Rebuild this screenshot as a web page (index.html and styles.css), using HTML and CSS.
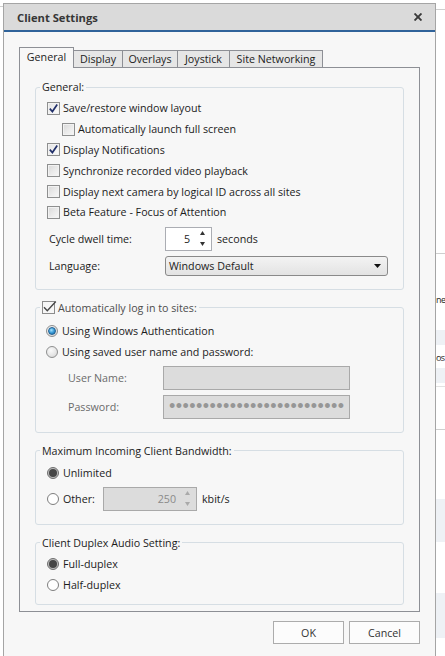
FILE: index.html
```html
<!DOCTYPE html>
<html>
<head>
<meta charset="utf-8">
<title>Client Settings</title>
<link rel="stylesheet" href="styles.css">
</head>
<body>
<div class="screen">
  <div class="bg-left"><div class="gap g6"></div><div class="hline"></div></div>

  <div class="dialog">
    <div class="titlebar">
      <span class="title">Client Settings</span>
      <svg class="close" width="8" height="8" viewBox="0 0 8 8"><path d="M0.5 0.5 L7.5 7.5 M7.5 0.5 L0.5 7.5" stroke="#3a3a3a" stroke-width="1.9" fill="none"/></svg>
    </div>

    <div class="dlg-body">
      <div class="tabs">
        <div class="tab active w-general">General</div>
        <div class="tab w-display">Display</div>
        <div class="tab w-overlays">Overlays</div>
        <div class="tab w-joystick">Joystick</div>
        <div class="tab w-site">Site Networking</div>
      </div>

      <div class="panel">
        <fieldset class="group">
          <legend>General:</legend>
          <div class="gbody g1">
            <div class="row"><span class="cb checked"><svg width="11" height="11" viewBox="0 0 11 11"><path d="M1.8 5.6 L4.4 8.6 L9.2 1.6" stroke="#22306a" stroke-width="1.7" fill="none"/></svg></span><span>Save/restore window layout</span></div>
            <div class="row indent"><span class="cb"></span><span>Automatically launch full screen</span></div>
            <div class="row"><span class="cb checked"><svg width="11" height="11" viewBox="0 0 11 11"><path d="M1.8 5.6 L4.4 8.6 L9.2 1.6" stroke="#22306a" stroke-width="1.7" fill="none"/></svg></span><span>Display Notifications</span></div>
            <div class="row"><span class="cb"></span><span>Synchronize recorded video playback</span></div>
            <div class="row"><span class="cb"></span><span>Display next camera by logical ID across all sites</span></div>
            <div class="row"><span class="cb"></span><span>Beta Feature - Focus of Attention</span></div>

            <div class="frow spin-row">
              <span class="flabel">Cycle dwell time:</span>
              <div class="spin">
                <span class="val">5</span>
                <span class="arrows">
                  <svg width="5" height="4" viewBox="0 0 5 4"><path d="M2.5 0 L5 4 L0 4 Z" fill="#333"/></svg>
                  <svg width="5" height="4" viewBox="0 0 5 4"><path d="M0 0 L5 0 L2.5 4 Z" fill="#333"/></svg>
                </span>
              </div>
              <span class="unit">seconds</span>
            </div>
            <div class="frow lang-row">
              <span class="flabel">Language:</span>
              <div class="combo">
                <span>Windows Default</span>
                <svg width="7" height="4" viewBox="0 0 7 4"><path d="M0 0 L7 0 L3.5 4 Z" fill="#111"/></svg>
              </div>
            </div>
          </div>
        </fieldset>

        <fieldset class="group">
          <legend class="cb-legend"><span class="cbflat"><svg width="15" height="12" viewBox="0 0 15 12"><path d="M2 6.3 L5.3 9.8 L13.8 0.6" stroke="#474747" stroke-width="1.4" fill="none"/></svg></span><span class="muted">Automatically log in to sites:</span></legend>
          <div class="gbody g2">
            <div class="row"><span class="rd aero on"></span><span>Using Windows Authentication</span></div>
            <div class="row"><span class="rd aero"></span><span>Using saved user name and password:</span></div>
            <div class="frow cred first">
              <span class="clabel">User Name:</span>
              <div class="dis-input"></div>
            </div>
            <div class="frow cred">
              <span class="clabel">Password:</span>
              <div class="dis-input"><span class="dots">••••••••••••••••••••••••••</span></div>
            </div>
          </div>
        </fieldset>

        <fieldset class="group">
          <legend>Maximum Incoming Client Bandwidth:</legend>
          <div class="gbody g3">
            <div class="row"><span class="rd flat on"></span><span>Unlimited</span></div>
            <div class="frow other-row">
              <span class="rd flat"></span>
              <span class="olabel">Other:</span>
              <div class="dis-spin">
                <span class="val">250</span>
                <span class="arrows">
                  <svg width="5" height="4" viewBox="0 0 5 4"><path d="M2.5 0 L5 4 L0 4 Z" fill="#a9a9a9"/></svg>
                  <svg width="5" height="4" viewBox="0 0 5 4"><path d="M0 0 L5 0 L2.5 4 Z" fill="#a9a9a9"/></svg>
                </span>
              </div>
              <span class="unit">kbit/s</span>
            </div>
          </div>
        </fieldset>

        <fieldset class="group">
          <legend>Client Duplex Audio Setting:</legend>
          <div class="gbody g4">
            <div class="row"><span class="rd flat on"></span><span>Full-duplex</span></div>
            <div class="row"><span class="rd flat"></span><span>Half-duplex</span></div>
          </div>
        </fieldset>
      </div>

      <div class="buttons">
        <div class="btn ok">OK</div>
        <div class="btn cancel">Cancel</div>
      </div>
    </div>
  </div>

  <div class="bg-right">
    <div class="gap h9"></div><div class="hline"></div>
    <div class="gap h243"></div><div class="hline"></div>
    <div class="gap h38"></div><div class="btext">ne</div>
    <div class="gap h22"></div><div class="band h15"></div>
    <div class="gap h5"></div><div class="btext">os</div>
    <div class="gap h2"></div><div class="band h15"></div>
    <div class="gap h3"></div><div class="hline light"></div>
    <div class="gap h42"></div><div class="hline"></div>
    <div class="gap h69"></div><div class="band h43"></div>
    <div class="gap h51"></div><div class="band h45"></div>
  </div>
</div>
</body>
</html>
```

FILE: styles.css
```css
* { box-sizing: border-box; }
html, body { margin: 0; padding: 0; }
body {
  width: 445px;
  height: 656px;
  overflow: hidden;
  background: #ffffff;
  font-family: "Open Sans", "Noto Sans", sans-serif;
  font-size: 10.7px;
  color: #1c1c1c;
}
.screen { display: flex; height: 656px; }

/* background page strips */
.bg-left { width: 3px; flex: none; display: flex; flex-direction: column; }
.bg-right { width: 9px; flex: none; overflow: hidden; display: flex; flex-direction: column; }
.gap { flex: none; }
.g6 { height: 6px; }
.h2 { height: 2px; } .h3 { height: 3px; } .h5 { height: 5px; } .h9 { height: 9px; }
.h22 { height: 22px; } .h38 { height: 38px; } .h42 { height: 42px; } .h51 { height: 51px; }
.h69 { height: 69px; } .h243 { height: 243px; }
.hline { height: 1px; flex: none; background: #cfcfcf; }
.hline.light { background: #e2e2e2; }
.band { flex: none; background: #eef1f5; }
.h15 { height: 15px; } .h43 { height: 43px; } .h45 { height: 45px; }
.btext {
  height: 16px;
  flex: none;
  line-height: 16px;
  font-size: 9px;
  letter-spacing: -0.6px;
  color: #222;
  white-space: nowrap;
}

/* dialog */
.dialog {
  width: 433px;
  flex: none;
  margin-top: 3px;
  height: 653px;
  border: 1px solid #a5a5a5;
  border-bottom: none;
  background: #f7f7f7;
  display: flex;
  flex-direction: column;
}
.titlebar {
  height: 28px;
  flex: none;
  background: #dadada;
  border-bottom: 2px solid #30639a;
  display: flex;
  align-items: center;
  justify-content: space-between;
  padding: 0 13px 0 13px;
}
.title { font-weight: 700; font-size: 11.2px; color: #363636; }
.close { display: block; }

.dlg-body { padding: 15px 15px 0 15px; }

/* tabs */
.tabs { display: flex; align-items: flex-end; height: 20px; }
.tab {
  height: 17px;
  border: 1px solid #8d8f95;
  border-bottom: none;
  background: #e6e6e6;
  margin-right: -1px;
  display: flex;
  align-items: center;
  justify-content: center;
  padding-bottom: 1px;
}
.tab.active {
  height: 21px;
  margin-bottom: -1px;
  background: #f7f7f7;
  position: relative;
  z-index: 1;
  padding-bottom: 2px;
}
.w-general { width: 55px; }
.w-display { width: 50px; }
.w-overlays { width: 56px; }
.w-joystick { width: 53px; }
.w-site { width: 94px; }

.panel {
  height: 545px;
  border: 1px solid #8d8f95;
  background: #f7f7f7;
  padding: 12px 15px 0 15px;
}

/* group boxes */
.group {
  margin: 0;
  padding: 0;
  min-width: 0;
  border: 1px solid #d6dee4;
  border-radius: 3px;
}
.group + .group { margin-top: 11px; }
legend {
  margin-left: 4px;
  padding: 0 2px;
  height: 14px;
  line-height: 14px;
}
.cb-legend { display: flex; align-items: center; gap: 3px; }
.muted { color: #4d4d4d; }

.gbody { padding-left: 11px; padding-right: 15px; }
.g1 { padding-top: 4px; padding-bottom: 13px; }
.g2 { padding-top: 6px; padding-bottom: 13px; padding-left: 10px; }
.g3 { padding-top: 5px; padding-bottom: 13px; }
.g4 { padding-top: 4px; padding-bottom: 8px; }

.row { display: flex; align-items: center; height: 20.8px; gap: 3px; white-space: nowrap; }
.g2 .row, .g3 .row, .g4 .row { height: 21px; gap: 4px; }
.row.indent { margin-left: 15px; }

/* checkboxes */
.cb {
  width: 13px;
  height: 13px;
  flex: none;
  border: 1px solid #8e8f8f;
  background: linear-gradient(135deg, #d8d8d8 0%, #ebebeb 55%, #f7f7f7 100%);
  box-shadow: inset 0 0 0 1px #f2f2f2;
  display: flex;
  align-items: center;
  justify-content: center;
}
.cb.checked { background: linear-gradient(135deg, #e2e2e2 0%, #f3f3f3 60%, #fbfbfb 100%); }
.cb svg { display: block; }
.cbflat {
  width: 13px;
  height: 13px;
  flex: none;
  border: 1px solid #8d8d8d;
  display: block;
}
.cbflat svg { display: block; overflow: visible; margin: -1px 0 0 -1px; }

/* radios */
.rd { width: 12px; height: 12px; flex: none; border-radius: 50%; }
.rd.aero {
  border: 1px solid #8e8f8f;
  background: radial-gradient(circle at 40% 35%, #fafafa 0%, #e6e6e6 55%, #cfcfcf 100%);
  display: flex;
  align-items: center;
  justify-content: center;
}
.rd.aero.on::after {
  content: "";
  width: 6px;
  height: 6px;
  border-radius: 50%;
  border: 1px solid #1f5f92;
  background: radial-gradient(circle at 40% 35%, #a7e3ff 0%, #3a9bd6 50%, #1565a0 100%);
}
.rd.flat {
  border: 1px solid #7e7e7e;
  background: #fff;
  display: flex;
  align-items: center;
  justify-content: center;
}
.rd.flat.on { background: #bdbdbd; border-color: #6f6f6f; }
.rd.flat.on::after {
  content: "";
  width: 8px;
  height: 8px;
  border-radius: 50%;
  background: #454545;
}

/* field rows */
.frow { display: flex; align-items: center; white-space: nowrap; }
.flabel { width: 118px; padding-left: 2px; flex: none; }
.spin-row { margin-top: 4px; height: 24px; }
.lang-row { margin-top: 5px; height: 20px; }

.spin {
  width: 47px;
  height: 24px;
  border: 1px solid #abadb3;
  background: #fff;
  display: flex;
  align-items: center;
  flex: none;
}
.val { flex: 1; text-align: right; padding-right: 3px; }
.spin .val { padding-right: 7px; }
.arrows {
  width: 14px;
  flex: none;
  display: flex;
  flex-direction: column;
  align-items: center;
  gap: 7px;
  padding-right: 3px;
}
.arrows svg { display: block; }
.unit { margin-left: 5px; }

.combo {
  width: 223px;
  height: 20px;
  border: 1px solid #8a8a8a;
  border-radius: 3px;
  background: linear-gradient(#f3f3f3, #e3e3e3);
  display: flex;
  align-items: center;
  justify-content: space-between;
  padding: 0 6px 0 3px;
  flex: none;
}
.combo svg { display: block; }

.cred { height: 24px; }
.cred.first { margin-top: 3px; }
.cred + .cred { margin-top: 5px; }
.clabel { margin-left: 22px; width: 95px; flex: none; color: #6b6b6b; }
.dis-input {
  width: 187px;
  height: 24px;
  border: 1px solid #a9a9a9;
  background: #dcdcdc;
  overflow: hidden;
  padding-left: 5px;
  flex: none;
}
.dots {
  display: block;
  font-family: "Liberation Sans", Arial, sans-serif;
  font-size: 18px;
  letter-spacing: 0.45px;
  line-height: 21px;
  color: #969696;
  white-space: nowrap;
}

.other-row { margin-top: 3px; height: 24px; }
.olabel { margin-left: 4px; width: 40px; flex: none; }
.dis-spin {
  width: 94px;
  height: 24px;
  border: 1px solid #a9a9a9;
  background: #dcdcdc;
  display: flex;
  align-items: center;
  color: #8a8a8a;
  flex: none;
}
.dis-spin .val { padding-right: 6px; }

/* buttons */
.buttons { display: flex; justify-content: flex-end; gap: 5px; margin-top: 9px; }
.btn {
  height: 23px;
  border: 1px solid #acacac;
  background: #fcfcfc;
  display: flex;
  align-items: center;
  justify-content: center;
  color: #333;
}
.ok { width: 71px; }
.cancel { width: 71px; }
```
